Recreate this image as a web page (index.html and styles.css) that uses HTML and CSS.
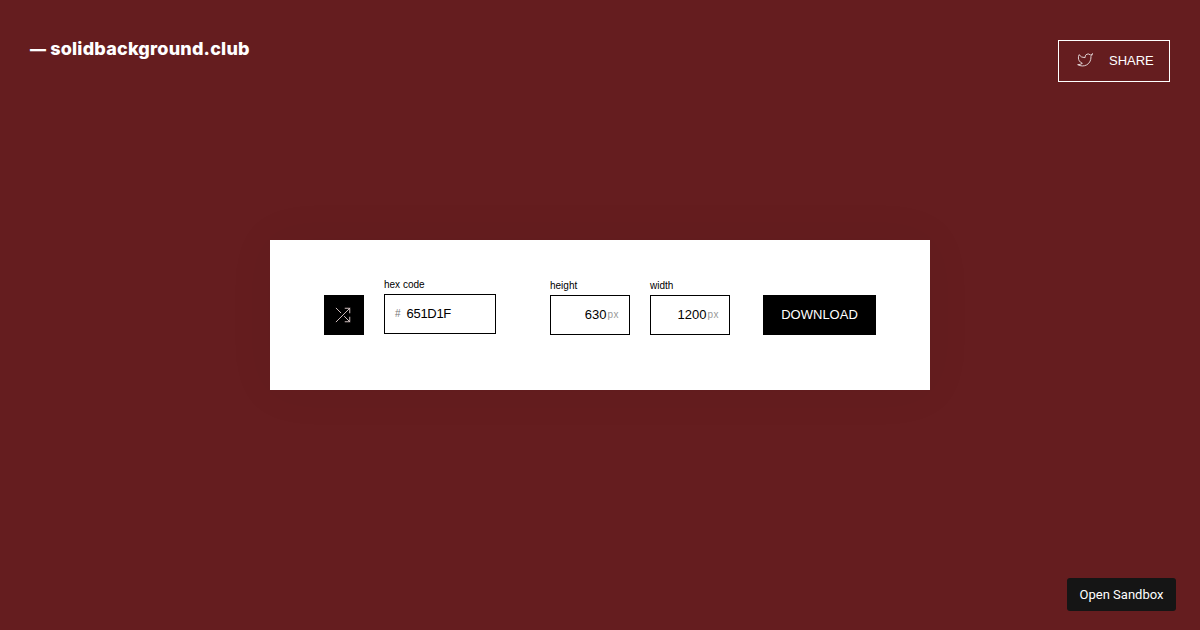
FILE: index.html
```html
<!DOCTYPE html>
<html lang="en">
<head>
  <meta charset="UTF-8">
  <meta name="viewport" content="width=device-width, initial-scale=1.0">
  <title>solidbackground.club</title>
  <link rel="stylesheet" href="styles.css">
</head>
<body>
  <header class="header">
    <div class="logo"><span class="logo-dash">—</span>solidbackground.club</div>
    <a class="share" href="#">
      <svg class="share-icon" width="18" height="16" viewBox="0 0 24 24" fill="none" stroke="currentColor" stroke-width="1.4" stroke-linecap="round" stroke-linejoin="round">
        <path d="M23 3a10.9 10.9 0 0 1-3 1.5 4.48 4.48 0 0 0-7.86 3v1A10.66 10.66 0 0 1 3 4s-4 9 5 13a11.64 11.64 0 0 1-7 2c9 5 20 0 20-11.5a4.5 4.5 0 0 0-.08-.83A7.72 7.72 0 0 0 23 3z"/>
      </svg>
      <span class="share-text">SHARE</span>
    </a>
  </header>

  <main class="card">
    <button class="shuffle" type="button">
      <svg class="shuffle-icon" width="18" height="18" viewBox="0 0 24 24" fill="none" stroke="currentColor" stroke-width="1.3" stroke-linecap="square">
        <polyline points="15 3 21 3 21 9"/>
        <line x1="3" y1="21" x2="21" y2="3"/>
        <polyline points="21 15 21 21 15 21"/>
        <line x1="14" y1="14" x2="21" y2="21"/>
        <line x1="3" y1="3" x2="9" y2="9"/>
      </svg>
    </button>

    <div class="field field-hex">
      <label class="field-label">hex code</label>
      <div class="input-box hex-box">
        <span class="hash">#</span>
        <span class="hex-value">651D1F</span>
      </div>
    </div>

    <div class="field field-height">
      <label class="field-label">height</label>
      <div class="input-box size-box">
        <span>630</span>
        <span class="unit">px</span>
      </div>
    </div>

    <div class="field field-width">
      <label class="field-label">width</label>
      <div class="input-box size-box">
        <span>1200</span>
        <span class="unit">px</span>
      </div>
    </div>

    <button class="download" type="button">DOWNLOAD</button>
  </main>

  <a class="sandbox" href="#">Open Sandbox</a>
</body>
</html>
```

FILE: styles.css
```css
* {
  box-sizing: border-box;
}

html, body {
  height: 100%;
}

body {
  margin: 0;
  background-color: #651d1f;
  font-family: "Liberation Sans", Arial, sans-serif;
  color: #000;
  overflow: hidden;
}

.header {
  height: 240px;
  padding: 40px 30px 0;
  display: flex;
  justify-content: space-between;
  align-items: flex-start;
}

.logo {
  font-family: Inter, sans-serif;
  font-weight: 800;
  font-size: 18px;
  line-height: 17px;
  letter-spacing: 0.2px;
  color: #fff;
}

.logo-dash {
  font-size: 16px;
  font-weight: 900;
  margin-right: 4px;
}

.share {
  width: 112px;
  height: 42px;
  padding: 0 0 2px 17px;
  display: flex;
  align-items: center;
  gap: 15px;
  border: 1px solid #fff;
  color: #fff;
  font-size: 13px;
  text-decoration: none;
}

.share-icon {
  opacity: 0.85;
}

.card {
  width: 660px;
  height: 150px;
  margin: 0 auto;
  padding: 0 54px 55px;
  display: flex;
  align-items: flex-end;
  background-color: #fff;
  box-shadow: 0 0 50px rgba(0, 0, 0, 0.05);
}

.shuffle {
  width: 40px;
  height: 40px;
  padding: 0 2px 0 0;
  display: flex;
  align-items: center;
  justify-content: center;
  border: none;
  background-color: #000;
  color: #d6c4c4;
}

.field {
  display: flex;
  flex-direction: column;
}

.field-label {
  font-size: 10px;
  line-height: 11px;
  margin-bottom: 4px;
}

.field-hex {
  margin-left: 20px;
  margin-bottom: 1px;
}

.field-height {
  margin-left: 54px;
}

.field-width {
  margin-left: 20px;
}

.input-box {
  height: 40px;
  padding-bottom: 2px;
  display: flex;
  align-items: center;
  border: 1px solid #000;
  font-size: 13px;
}

.hex-box {
  width: 112px;
  padding-left: 10px;
}

.hex-value {
  letter-spacing: -0.3px;
}

.hash {
  font-size: 10px;
  color: #777;
  margin-right: 6px;
}

.size-box {
  width: 80px;
  padding-right: 10px;
  justify-content: flex-end;
}

.unit {
  font-size: 10px;
  letter-spacing: 0.5px;
  color: #999;
  margin-left: 1px;
}

.download {
  width: 113px;
  height: 40px;
  margin-left: 33px;
  padding: 0 0 2px;
  border: none;
  background-color: #000;
  color: #fff;
  font-family: inherit;
  font-size: 13px;
}

.sandbox {
  position: fixed;
  right: 24px;
  bottom: 19px;
  width: 109px;
  height: 33px;
  display: flex;
  align-items: center;
  justify-content: center;
  border-radius: 3px;
  background-color: #151515;
  color: #fff;
  font-family: Roboto, sans-serif;
  font-size: 13px;
  text-decoration: none;
}
```
